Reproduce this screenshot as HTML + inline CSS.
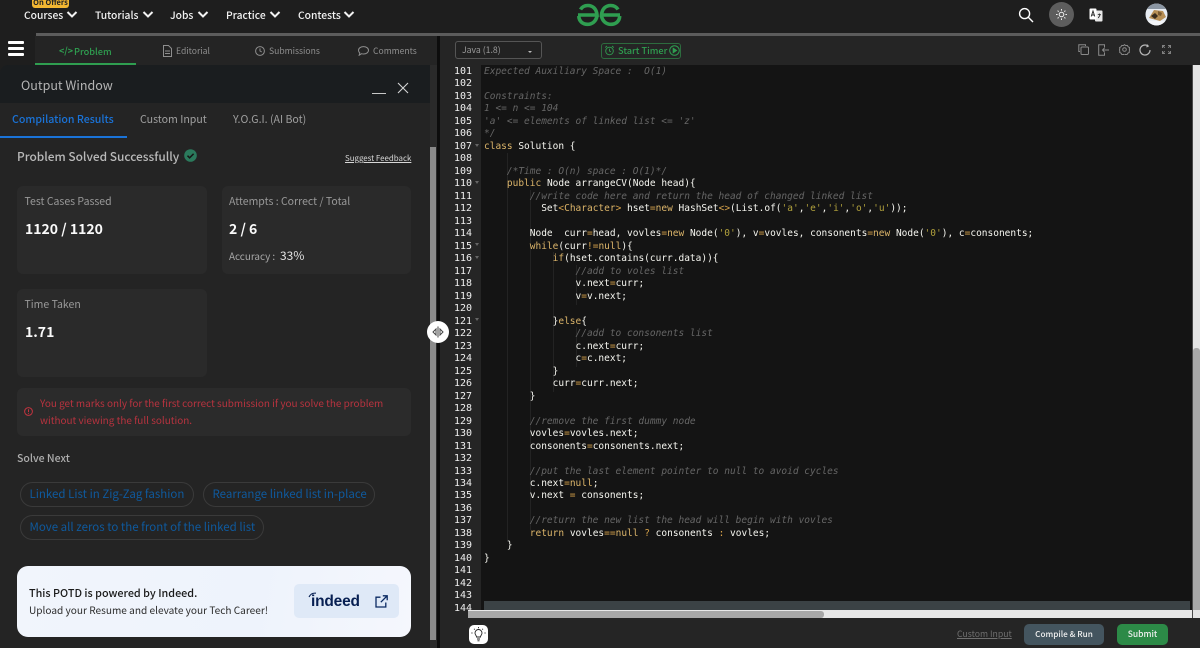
<!DOCTYPE html>
<html><head><meta charset="utf-8">
<style>
*{box-sizing:border-box;margin:0;padding:0}
html,body{width:1200px;height:648px;overflow:hidden;background:#1e1e1e}
body{position:relative;font-family:"Noto Sans CJK JP","Liberation Sans",sans-serif;color:#ddd}
.a{position:absolute;white-space:nowrap}
.nav{top:7px;font-size:10.3px;line-height:16px;font-weight:500;color:#f2f2f2}
.chev{position:absolute;top:11px;width:12px;height:7px}
.tab{top:44px;font-size:8.6px;line-height:14px;color:#8e8e8e}
.card{position:absolute;background:#2a2a2a;border-radius:6px}
.lbl{font-size:10.5px;line-height:14px;color:#999}
.val{font-size:14px;line-height:18px;font-weight:700;color:#fafafa}
.pill{position:absolute;height:25px;border:1px solid #3a3a3a;border-radius:13px;font-size:11.5px;line-height:23px;color:#0f5a9e;padding-left:8.5px;white-space:nowrap;font-family:"Noto Sans CJK JP",sans-serif}
#code,#nums{font-family:"DejaVu Sans Mono","Liberation Mono",monospace;line-height:12.48px;white-space:pre}
#code{position:absolute;left:484px;top:66px;color:#f6f6f0;font-size:9.5px}
#nums{position:absolute;left:440px;width:32px;top:66px;text-align:right;color:#efefef;font-size:10px}
i{color:#666;font-style:italic}
b{color:#dcb56a;font-weight:400}
u{color:#b0a03c;text-decoration:none}
em{color:#d6a24a;font-style:normal}
.g{position:absolute;width:1px;background:#232323}
.f{position:absolute;left:475px;width:0;height:0;border-left:2.5px solid transparent;border-right:2.5px solid transparent;border-top:3px solid #666}
</style></head><body>

<!-- top navigation -->
<div class="a" style="left:32px;top:0;width:37px;height:8px;background:#f2b632;border-radius:0 0 3px 3px;color:#222;font-size:7.5px;line-height:5px;text-align:center;font-weight:700;overflow:hidden">On Offers</div>
<div class="a nav" style="left:24px">Courses</div>
<svg class="chev" style="left:66px" viewBox="0 0 12 7"><path d="M1.5 1l4.500 4.500L10.500 1" fill="none" stroke="#f2f2f2" stroke-width="2"/></svg>
<div class="a nav" style="left:95px">Tutorials</div>
<svg class="chev" style="left:142px" viewBox="0 0 12 7"><path d="M1.5 1l4.500 4.500L10.500 1" fill="none" stroke="#f2f2f2" stroke-width="2"/></svg>
<div class="a nav" style="left:170px">Jobs</div>
<svg class="chev" style="left:197px" viewBox="0 0 12 7"><path d="M1.5 1l4.500 4.500L10.500 1" fill="none" stroke="#f2f2f2" stroke-width="2"/></svg>
<div class="a nav" style="left:226px">Practice</div>
<svg class="chev" style="left:269px" viewBox="0 0 12 7"><path d="M1.5 1l4.500 4.500L10.500 1" fill="none" stroke="#f2f2f2" stroke-width="2"/></svg>
<div class="a nav" style="left:298px">Contests</div>
<svg class="chev" style="left:343px" viewBox="0 0 12 7"><path d="M1.5 1l4.500 4.500L10.500 1" fill="none" stroke="#f2f2f2" stroke-width="2"/></svg>

<!-- GfG logo -->
<svg class="a" style="left:576px;top:2px" width="46" height="25" viewBox="0 0 46 25" fill="none" stroke="#2f9e50" stroke-width="3.600">
<path d="M2 13H21C20.500 6.500 16.500 3.500 11.800 3.500C8.500 3.500 6 5 4.500 7.500"/>
<path d="M2.800 14C3 19.500 7 22.300 11.500 22.300C16 22.300 20 19.500 21 14"/>
<path d="M44 13H25.500C26 6.500 30 3.500 34.700 3.500C38 3.500 40.500 5 42 7.500"/>
<path d="M43.700 14C43.500 19.500 39.500 22.300 35 22.300C30.500 22.300 26.500 19.500 25.500 14"/>
</svg>

<!-- top right -->
<svg class="a" style="left:1018px;top:7px" width="16" height="16" viewBox="0 0 16 16" fill="none" stroke="#fff" stroke-width="1.400"><circle cx="6.600" cy="6.600" r="5"/><path d="M10.400 10.400L15 15"/></svg>
<div class="a" style="left:1049px;top:2px;width:25px;height:25px;border-radius:50%;background:#5d5d5d"></div>
<svg class="a" style="left:1055px;top:8px" width="13" height="13" viewBox="0 0 13 13" fill="none" stroke="#eee"><circle cx="6.500" cy="6.500" r="2.300"/><path d="M6.500 1v1.600M6.500 10.400V12M1 6.500h1.600M10.400 6.500H12M2.600 2.600l1.100 1.100M9.300 9.300l1.100 1.100M2.600 10.400l1.100-1.100M9.300 3.700l1.100-1.100"/></svg>
<svg class="a" style="left:1089px;top:8px" width="14" height="14" viewBox="0 0 14 14"><rect x="6" y="2.500" width="7.500" height="11" rx="1" fill="#e8e8e8"/><rect x="0.500" y="0.500" width="7" height="11" rx="1" fill="#fff"/><path d="M2.200 8.500L4 3l1.800 5.500M2.800 7h2.400" stroke="#222" stroke-width=".9" fill="none"/><path d="M8.800 6.500h3M10.300 5.500v1M9.300 10l2-3.500" stroke="#222" stroke-width=".8" fill="none"/></svg>
<svg class="a" style="left:1145px;top:3px" width="23" height="23" viewBox="0 0 23 23"><defs><clipPath id="av"><circle cx="11.500" cy="11.500" r="11"/></clipPath></defs><g clip-path="url(#av)"><rect width="23" height="23" fill="#e8edf3"/><rect y="0" width="23" height="6" fill="#8b96a3"/><path d="M4 15L9 7l9 1 3 6-6 4z" fill="#b78f55"/><path d="M6 13l4-3 3 3-3 3z" fill="#3a2c1c"/><path d="M13 8l4 2-1 3-3-1z" fill="#7a5a30"/><path d="M0 18h23v5H0z" fill="#f4f6f9"/></g></svg>

<!-- header divider -->
<div class="a" style="left:36px;top:33px;width:1164px;height:3px;background:#5c5c5c"></div>

<!-- left panel tabs -->
<div class="a" style="left:0;top:36px;width:437px;height:29px;background:#242424"></div>
<div class="a" style="left:0;top:36px;width:35px;height:29px;background:#1e1e1e"></div>
<div class="a" style="left:8px;top:41px;width:16px;height:3px;background:#fff;border-radius:1px"></div>
<div class="a" style="left:8px;top:47px;width:16px;height:3px;background:#fff;border-radius:1px"></div>
<div class="a" style="left:8px;top:53px;width:16px;height:3px;background:#fff;border-radius:1px"></div>
<div class="a" style="left:35px;top:63px;width:101px;height:2px;background:#2f9e50"></div>
<div class="a tab" style="left:59px;color:#2f9e50;font-weight:700;font-size:9px">&lt;/&gt;</div>
<div class="a tab" style="left:74px;color:#2f9e50;font-weight:500;font-size:9.200px">Problem</div>
<svg class="a" style="left:163px;top:45px" width="9" height="12" viewBox="0 0 9 12" fill="none" stroke="#8e8e8e"><path d="M.5.5h5l3 3v8h-8zM2 6h5M2 8.500h5"/></svg>
<div class="a tab" style="left:176px">Editorial</div>
<svg class="a" style="left:255px;top:46px" width="10" height="10" viewBox="0 0 10 10" fill="none" stroke="#8e8e8e"><circle cx="5" cy="5" r="4.400"/><path d="M5 2.400V5l1.800 1"/></svg>
<div class="a tab" style="left:269px">Submissions</div>
<svg class="a" style="left:358px;top:46px" width="11" height="10" viewBox="0 0 11 10" fill="none" stroke="#8e8e8e"><path d="M5.500.6c2.800 0 5 1.600 5 3.700s-2.200 3.700-5 3.700c-.7 0-1.300-.1-1.900-.3L1.200 9.200l.6-2.200C1 6.300.5 5.300.5 4.300.5 2.200 2.700.6 5.500.6z"/></svg>
<div class="a tab" style="left:373px">Comments</div>

<!-- output window -->
<div class="a" style="left:0;top:65px;width:437px;height:583px;background:#242424;border-radius:8px 0 0 0"></div>
<div class="a" style="left:0;top:65px;width:430px;height:38px;background:#1a1d1f;border-radius:8px 0 0 0"></div>
<div class="a" style="left:21px;top:76px;font-size:12.500px;line-height:18px;color:#b4b4b4">Output Window</div>
<div class="a" style="left:372px;top:93px;width:14px;height:1px;background:#c8c8c8"></div>
<svg class="a" style="left:397px;top:82px" width="12" height="12" viewBox="0 0 12 12" stroke="#d4d4d4" stroke-width="1.100"><path d="M1 1l10 10M11 1L1 11"/></svg>

<div class="a" style="left:12px;top:112px;font-size:10.600px;line-height:16px;font-weight:500;color:#1a73d8">Compilation Results</div>
<div class="a" style="left:140px;top:112px;font-size:10.600px;line-height:16px;color:#a0a0a0">Custom Input</div>
<div class="a" style="left:233px;top:112px;font-size:10.600px;line-height:16px;color:#a0a0a0">Y.O.G.I. (AI Bot)</div>
<div class="a" style="left:0;top:135.500px;width:127px;height:2px;background:#1a73d8"></div>

<!-- scrollbar -->
<div class="a" style="left:430px;top:65px;width:7px;height:583px;background:#2a2a2a"></div>
<div class="a" style="left:430px;top:147px;width:6px;height:493px;background:#8a8a8a"></div>

<div class="a" style="left:17px;top:148px;font-size:11.900px;line-height:17px;font-weight:500;color:#b9b9b9">Problem Solved Successfully</div>
<svg class="a" style="left:184px;top:149px" width="13" height="13" viewBox="0 0 13 13"><circle cx="6.500" cy="6.500" r="6.300" fill="#2b7a5c"/><path d="M3.500 6.700l2.100 2.100 4-4" fill="none" stroke="#161616" stroke-width="1.500"/></svg>
<div class="a" style="left:345px;top:153px;font-size:7.900px;line-height:12px;color:#d8d8d8;text-decoration:underline">Suggest Feedback</div>

<div class="card" style="left:17px;top:186px;width:190px;height:88px"></div>
<div class="card" style="left:222px;top:186px;width:189px;height:88px"></div>
<div class="card" style="left:17px;top:289px;width:190px;height:88px"></div>
<div class="a lbl" style="left:24.500px;top:195px">Test Cases Passed</div>
<div class="a val" style="left:25px;top:220px">1120 / 1120</div>
<div class="a lbl" style="left:229px;top:195px">Attempts : Correct / Total</div>
<div class="a val" style="left:229px;top:220px">2 / 6</div>
<div class="a" style="left:229px;top:249px;font-size:9.900px;line-height:14px;color:#a8a8a8">Accuracy :</div>
<div class="a" style="left:280px;top:248px;font-size:12px;line-height:16px;color:#e4e4e4">33%</div>
<div class="a lbl" style="left:24.500px;top:298px">Time Taken</div>
<div class="a val" style="left:25px;top:323px">1.71</div>

<div class="card" style="left:17px;top:388px;width:394px;height:48px;background:#2b2b2b"></div>
<svg class="a" style="left:24px;top:407px" width="9" height="9" viewBox="0 0 9 9" fill="none" stroke="#c2333f"><circle cx="4.500" cy="4.500" r="3.900"/><path d="M4.500 2.200v2.800M4.500 5.900v.9"/></svg>
<div class="a" style="left:40px;top:395px;font-size:9.950px;line-height:16.500px;color:#b8333f">You get marks only for the first correct submission if you solve the problem<br>without viewing the full solution.</div>

<div class="a" style="left:17px;top:451px;font-size:10.500px;line-height:15px;font-weight:500;color:#aeaeae">Solve Next</div>
<div class="pill" style="left:20px;top:482px;width:174px">Linked List in Zig-Zag fashion</div>
<div class="pill" style="left:203px;top:482px;width:172px">Rearrange linked list in-place</div>
<div class="pill" style="left:20px;top:515px;width:244px">Move all zeros to the front of the linked list</div>

<!-- indeed banner -->
<div class="a" style="left:17px;top:566px;width:394px;height:71px;border-radius:11px;background:linear-gradient(100deg,#f1f5fc,#eef3fc 60%,#f5f7fd)"></div>
<div class="a" style="left:29px;top:585px;font-size:10.800px;line-height:16px;font-weight:500;color:#1a1a1a">This POTD is powered by Indeed.</div>
<div class="a" style="left:29px;top:603px;font-size:10.100px;line-height:14px;color:#2c2c2c">Upload your Resume and elevate your Tech Career!</div>
<div class="a" style="left:294px;top:584px;width:105px;height:34px;border-radius:5px;background:#dfe9f7"></div>
<div class="a" style="left:311px;top:592px;font-family:'Liberation Sans',sans-serif;font-size:15.500px;line-height:20px;font-weight:700;color:#071f52;letter-spacing:-.2px">indeed</div>
<svg class="a" style="left:308px;top:592px" width="9" height="6" viewBox="0 0 9 6" fill="none" stroke="#071f52" stroke-width="1.100"><path d="M1 5C2.500 2 5 .8 8 1.200"/></svg>
<svg class="a" style="left:375px;top:595px" width="13" height="13" viewBox="0 0 13 13" fill="none" stroke="#0b2a63" stroke-width="1.300"><path d="M5.500 2.200H1v9.800h9.800V7.500M7.800.8h4.400v4.400M12 1L5.800 7.200"/></svg>

<!-- divider between panes -->
<div class="a" style="left:437px;top:36px;width:3px;height:612px;background:#0d0d0d"></div>

<!-- editor toolbar -->
<div class="a" style="left:440px;top:36px;width:760px;height:29px;background:#252525"></div>
<div class="a" style="left:455px;top:41px;width:87px;height:18px;border:1px solid #555;border-radius:3px;background:#222;color:#9b9b9b;font-size:8.700px;line-height:16px;padding-left:6px">Java (1.8)</div>
<div class="a" style="left:528px;top:51px;width:0;height:0;border-left:2.500px solid transparent;border-right:2.500px solid transparent;border-top:2.500px solid #bbb"></div>
<div class="a" style="left:601px;top:43px;width:80px;height:16px;border:1px solid #2d6b3e;border-radius:3px"></div>
<svg class="a" style="left:604px;top:45px" width="11" height="11" viewBox="0 0 11 11" fill="none" stroke="#2f9e50" stroke-width=".9"><circle cx="5.500" cy="6" r="3.800"/><path d="M5.500 3.800V6l1.400.9M1.200 2.600l1.800-1.600M9.800 2.600L8 1"/></svg>
<div class="a" style="left:618px;top:43px;font-size:9.200px;line-height:15px;font-weight:500;color:#2f9e50">Start Timer</div>
<svg class="a" style="left:669px;top:45px" width="11" height="11" viewBox="0 0 11 11" fill="none" stroke="#2f9e50"><circle cx="5.500" cy="5.500" r="4.800"/><path d="M4.200 3.300l3.300 2.200-3.300 2.200z" fill="#2f9e50"/></svg>
<svg class="a" style="left:1078px;top:44px" width="11" height="11" viewBox="0 0 11 11" fill="none" stroke="#8a8a8a"><rect x="3" y="3" width="7.500" height="7.500" rx="1"/><path d="M2 7.500H.8V.8h6.700V2"/></svg>
<svg class="a" style="left:1098px;top:44px" width="12" height="12" viewBox="0 0 12 12" fill="none" stroke="#8a8a8a"><path d="M6.500 3.500V.7H.7v10.600h5.800V8.500M11 6H4.500M6.500 4L4.500 6l2 2"/></svg>
<svg class="a" style="left:1119px;top:44px" width="11" height="11" viewBox="0 0 11 11" fill="none" stroke="#8a8a8a"><circle cx="5.500" cy="5.500" r="1.800"/><path d="M5.500.6l1.200 1 1.600-.2.800 1.400 1.400.8-.2 1.600.6.800-.6 1-.1 1.500-1.400.7-.8 1.400-1.500-.2-1 .7-1-.7-1.600.2-.8-1.400-1.400-.7.100-1.500-.7-1 .7-1-.2-1.500 1.400-.7.800-1.400 1.600.2z"/></svg>
<svg class="a" style="left:1139px;top:44px" width="12" height="12" viewBox="0 0 12 12" fill="none" stroke="#b8b8b8" stroke-width="1.200"><path d="M8.700 1.800A5 5 0 1 0 11 6M7.800.6l1.400 1.500-1.800.9"/></svg>
<svg class="a" style="left:1162px;top:45px" width="9" height="9" viewBox="0 0 9 9" fill="none" stroke="#808080"><path d="M.5 3V.5H3M6 .5h2.500V3M8.500 6v2.500H6M3 8.500H.5V6M.8.800l2 2M8.200.8l-2 2M8.200 8.200l-2-2M.8 8.200l2-2"/></svg>

<!-- editor -->
<div class="a" style="left:440px;top:65px;width:41px;height:553px;background:#252525"></div>
<div class="a" style="left:481px;top:65px;width:711px;height:553px;background:#141414"></div>
<div class="a" style="left:1192px;top:65px;width:8px;height:553px;background:#e4e4e4"></div>
<div class="a" style="left:1193px;top:348px;width:7px;height:262px;background:#a8a8a8;border-radius:3px 3px 0 0"></div>
<div class="a" style="left:1192px;top:65px;width:1px;height:553px;background:#4a4a4a"></div>

<!-- indent guides -->
<div class="g" style="left:507px;top:153px;height:389px"></div>
<div class="g" style="left:530px;top:190px;height:340px"></div>
<div class="g" style="left:553px;top:252px;height:140px"></div>
<div class="g" style="left:576px;top:265px;height:40px"></div>
<div class="g" style="left:576px;top:327px;height:40px"></div>

<!-- fold markers -->
<div class="f" style="top:144px"></div>
<div class="f" style="top:181px"></div>
<div class="f" style="top:243px"></div>
<div class="f" style="top:256px"></div>
<div class="f" style="top:318px"></div>

<div id="nums">101
102
103
104
105
106
107
108
109
110
111
112
113
114
115
116
117
118
119
120
121
122
123
124
125
126
127
128
129
130
131
132
133
134
135
136
137
138
139
140
141
142
143
144</div>

<div id="code"><i>Expected Auxiliary Space :  O(1)</i>

<i>Constraints:</i>
<i>1 &lt;= n &lt;= 104</i>
<i>'a' &lt;= elements of linked list &lt;= 'z'</i>
<i>*/</i>
<b>class</b> Solution {

    <i>/*Time : O(n) space : O(1)*/</i>
    <b>public</b> Node arrangeCV(Node head){
        <i>//write code here and return the head of changed linked list</i>
          Set<em>&lt;</em><b>Character</b><em>&gt;</em> hset<em>=</em><b>new</b> HashSet<em>&lt;&gt;</em>(List.of(<u>'a'</u>,<u>'e'</u>,<u>'i'</u>,<u>'o'</u>,<u>'u'</u>));

        Node  curr<em>=</em>head, vovles<em>=</em><b>new</b> Node(<u>'0'</u>), v<em>=</em>vovles, consonents<em>=</em><b>new</b> Node(<u>'0'</u>), c<em>=</em>consonents;
        <b>while</b>(curr<em>!=</em><b>null</b>){
            <b>if</b>(hset.contains(curr.data)){
                <i>//add to voles list</i>
                v.next<em>=</em>curr;
                v<em>=</em>v.next;

            }<b>else</b>{
                <i>//add to consonents list</i>
                c.next<em>=</em>curr;
                c<em>=</em>c.next;
            }
            curr<em>=</em>curr.next;
        }

        <i>//remove the first dummy node</i>
        vovles<em>=</em>vovles.next;
        consonents<em>=</em>consonents.next;

        <i>//put the last element pointer to null to avoid cycles</i>
        c.next<em>=</em><b>null</b>;
        v.next <em>=</em> consonents;

        <i>//return the new list the head will begin with vovles</i>
        <b>return</b> vovles<em>==</em><b>null</b> <em>?</em> consonents <em>:</em> vovles;
    }
}</div>

<!-- horizontal scroll -->
<div class="a" style="left:484px;top:601px;width:706px;height:9px;background:#3b4245"></div>
<div class="a" style="left:468px;top:610px;width:724px;height:8px;background:#e8e8e8"></div>
<div class="a" style="left:468px;top:611px;width:356px;height:7px;background:#a8a8a8;border-radius:0 3px 3px 0"></div>

<!-- footer -->
<div class="a" style="left:440px;top:618px;width:760px;height:30px;background:#252525"></div>
<div class="a" style="left:469px;top:625px;width:19px;height:19px;border-radius:5px;background:#fff"></div>
<svg class="a" style="left:471px;top:627px" width="15" height="15" viewBox="0 0 15 15" fill="none" stroke="#222" stroke-width=".9"><path d="M5.500 10c0-1.500-1.500-2-1.500-4a3.500 3.500 0 0 1 7 0c0 2-1.500 2.500-1.500 4zM6 12h3M6.500 13.800h2M7.500 0v1.200M1.500 6H.4M14.600 6h-1.100M3 1.800l.8.800M12 1.800l-.8.800"/></svg>
<div class="a" style="left:957px;top:627px;font-size:8.700px;line-height:14px;color:#6f6f6f;text-decoration:underline">Custom Input</div>
<div class="a" style="left:1024px;top:624px;width:80px;height:21px;border-radius:5px;background:#44555f;color:#f0f0f0;font-size:8.200px;line-height:20px;text-align:center;font-weight:500">Compile &amp; Run</div>
<div class="a" style="left:1117px;top:624px;width:51px;height:21px;border-radius:5px;background:#2c8a47;color:#f0f0f0;font-size:8.500px;line-height:20px;text-align:center;font-weight:500">Submit</div>

<!-- resize handle -->
<div class="a" style="left:427px;top:321px;width:22px;height:22px;border-radius:50%;background:#fff;z-index:5"></div>
<svg class="a" style="left:431px;top:326px;z-index:6" width="14" height="12" viewBox="0 0 14 12"><path d="M5 3L2 6l3 3z" fill="none" stroke="#444"/><path d="M9 3l3 3-3 3z" fill="none" stroke="#444"/><path d="M7 .5v11" stroke="#444"/></svg>
</body></html>
